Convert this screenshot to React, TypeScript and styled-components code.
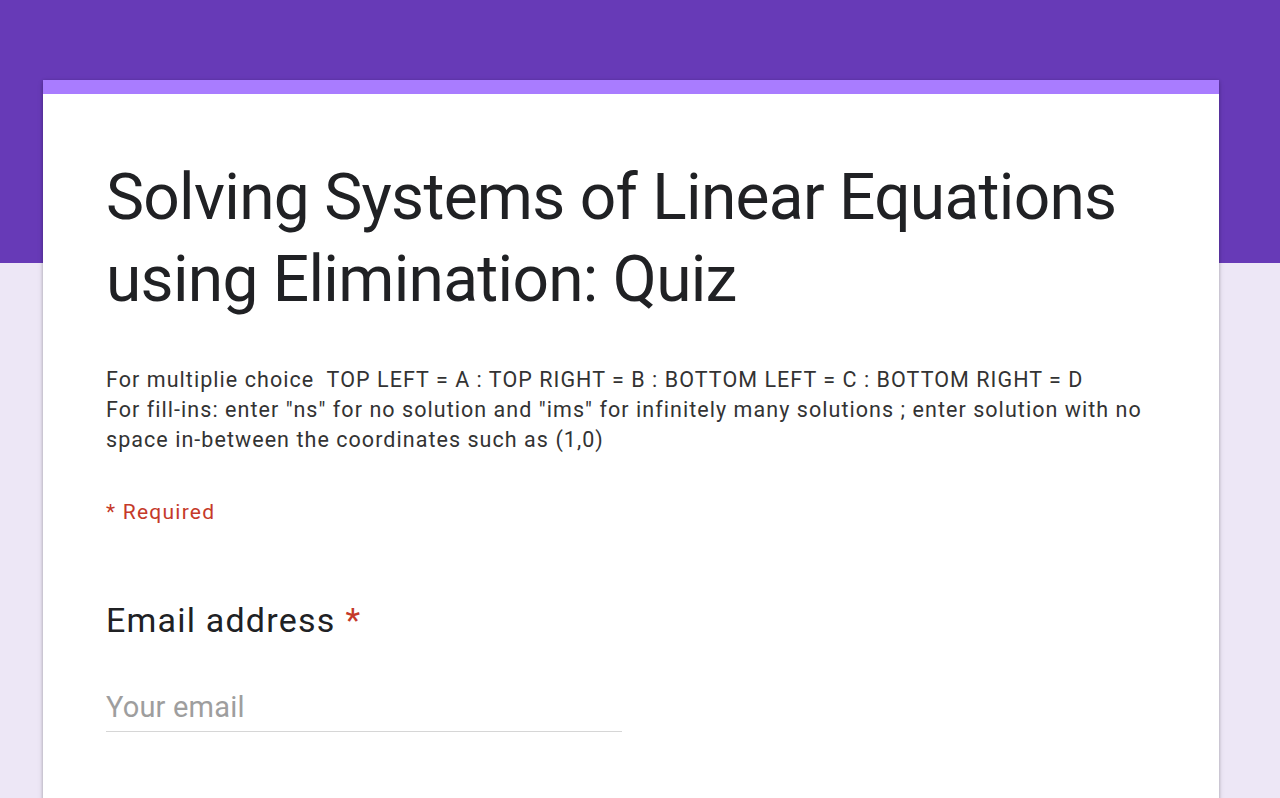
import React from 'react';
import styled, { createGlobalStyle } from 'styled-components';

const GlobalStyle = createGlobalStyle`
    html, body {
        margin: 0;
        padding: 0;
        background-color: #ede7f6;
        font-family: Roboto, 'Liberation Sans', Arial, sans-serif;
        overflow: hidden;
    }
`;

const Page = styled.div`
    min-height: 798px;
    background: linear-gradient(to bottom, #673ab7 0, #673ab7 263px, #ede7f6 263px);
    padding-top: 80px;
    box-sizing: border-box;
`;

const Card = styled.div`
    margin: 0 61px 0 43px;
    background-color: #fff;
    border-top: 14px solid #a97cff;
    box-shadow: 0 1px 3px rgba(0, 0, 0, 0.25), 0 2px 6px rgba(0, 0, 0, 0.12);
    padding: 63px 63px 80px;
    min-height: 800px;
`;

const Title = styled.h1`
    margin: 0;
    font-size: 64px;
    font-weight: 400;
    line-height: 82px;
    letter-spacing: -0.7px;
    color: #202124;
`;

const Description = styled.div`
    margin-top: 44px;
    font-size: 21.5px;
    line-height: 30px;
    letter-spacing: 1.05px;
    color: #333;
    white-space: pre-wrap;
`;

const Required = styled.div`
    margin-top: 45px;
    font-size: 21px;
    letter-spacing: 1.25px;
    color: #c53929;
`;

const Question = styled.div`
    margin-top: 76px;
`;

const QuestionTitle = styled.div`
    font-size: 34px;
    letter-spacing: 1.2px;
    color: #202124;
`;

const Star = styled.span`
    color: #c53929;
    margin-left: 10px;
`;

const EmailInput = styled.input`
    display: block;
    margin-top: 50px;
    width: 516px;
    height: 42px;
    box-sizing: border-box;
    border: none;
    border-bottom: 1px solid #d6d6d6;
    padding: 0 0 8px;
    font-family: inherit;
    font-size: 29px;
    line-height: 34px;
    letter-spacing: 0.2px;
    color: #202124;
    outline: none;
    background: transparent;

    &::placeholder {
        color: #9e9e9e;
    }
`;

const App: React.FC = () => {
    return (
        <Page>
            <GlobalStyle />
            <Card>
                <Title>
                    Solving Systems of Linear Equations using Elimination: Quiz
                </Title>
                <Description>
                    {'For multiplie choice  TOP LEFT = A : TOP RIGHT = B : BOTTOM LEFT = C : BOTTOM RIGHT = D\nFor fill-ins: enter "ns" for no solution and "ims" for infinitely many solutions ; enter solution with no space in-between the coordinates such as (1,0)'}
                </Description>
                <Required>* Required</Required>
                <Question>
                    <QuestionTitle>
                        Email address<Star>*</Star>
                    </QuestionTitle>
                    <EmailInput type="email" placeholder="Your email" />
                </Question>
            </Card>
        </Page>
    );
};

export default App;
